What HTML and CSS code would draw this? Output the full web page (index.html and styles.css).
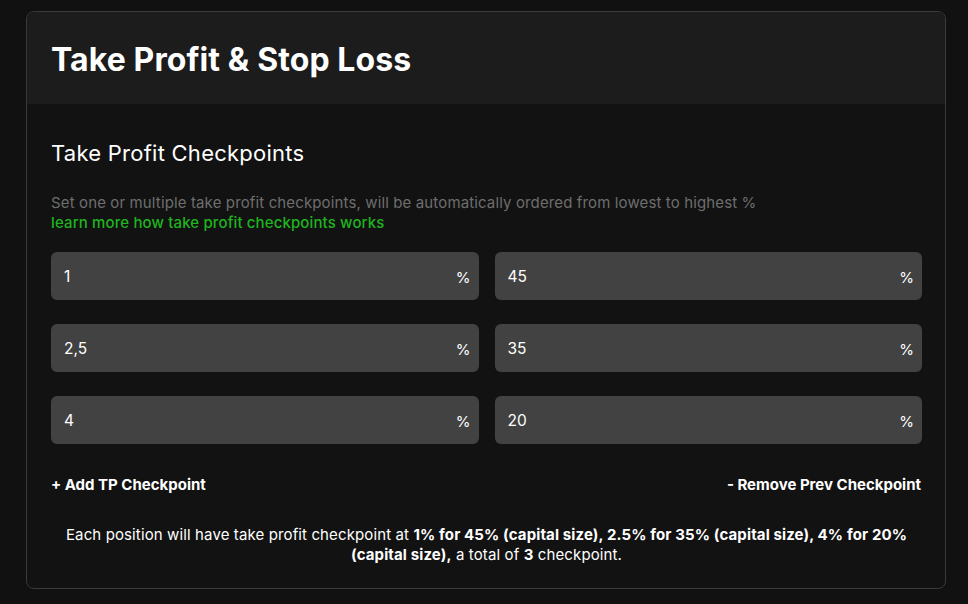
FILE: index.html
```html
<!DOCTYPE html>
<html>
<head>
<meta charset="utf-8">
<link rel="stylesheet" href="styles.css">
</head>
<body>
<div class="card">
  <div class="card-header">
    <h1 class="title">Take Profit &amp; Stop Loss</h1>
  </div>
  <div class="card-body">
    <h2 class="section-title">Take Profit Checkpoints</h2>
    <p class="desc">Set one or multiple take profit checkpoints, will be automatically ordered from lowest to highest %<br><a class="link" href="#">learn more how take profit checkpoints works</a></p>
    <div class="grid">
      <div class="field"><span class="val">1</span><span class="pct">%</span></div>
      <div class="field"><span class="val">45</span><span class="pct">%</span></div>
      <div class="field"><span class="val">2,5</span><span class="pct">%</span></div>
      <div class="field"><span class="val">35</span><span class="pct">%</span></div>
      <div class="field"><span class="val">4</span><span class="pct">%</span></div>
      <div class="field"><span class="val">20</span><span class="pct">%</span></div>
    </div>
    <div class="actions">
      <span class="action">+ Add TP Checkpoint</span>
      <span class="action">- Remove Prev Checkpoint</span>
    </div>
    <p class="summary">Each position will have take profit checkpoint at <b>1% for 45% (capital size), 2.5% for 35% (capital size), 4% for 20% (capital size),</b> a total of <b>3</b> checkpoint.</p>
  </div>
</div>
</body>
</html>
```
FILE: styles.css
```css
* { box-sizing: border-box; }
html, body { margin: 0; padding: 0; background: #111111; }
body {
  font-family: "Inter", "Noto Sans", sans-serif;
  color: #ffffff;
  padding: 11px 22px 0 26px;
}
.card {
  border: 1px solid #3a3a3a;
  border-radius: 8px;
  overflow: hidden;
  background: #121212;
  height: 578px;
}
.card-header {
  background: #1c1c1c;
  height: 92px;
  padding: 0 24px;
  display: flex;
  align-items: center;
}
.title {
  margin: 0;
  padding-top: 2px;
  font-size: 32px;
  font-weight: 700;
  letter-spacing: 0.1px;
}
.card-body {
  padding: 34px 23px 24px 24px;
}
.section-title {
  margin: 0;
  font-size: 22px;
  font-weight: 400;
  line-height: 30px;
  letter-spacing: 0.25px;
}
.desc {
  margin: 25px 0 0;
  font-size: 15px;
  line-height: 20px;
  color: #6e6e6e;
  letter-spacing: 0.13px;
}
.link {
  color: #1fb41f;
  text-decoration: none;
  font-weight: 500;
}
.grid {
  margin-top: 19px;
  display: grid;
  grid-template-columns: 1fr 1fr;
  column-gap: 16px;
  row-gap: 24px;
}
.field {
  background: #424242;
  border-radius: 6px;
  height: 48px;
  display: flex;
  align-items: center;
  justify-content: space-between;
  padding: 0 8px 0 13px;
  font-size: 15.5px;
}
.pct { font-size: 15px; padding-top: 2px; }
.actions {
  margin-top: 31px;
  display: flex;
  justify-content: space-between;
  font-size: 15px;
  font-weight: 700;
  line-height: 20px;
  padding-right: 1px;
}
.summary {
  margin: 30px 0 0;
  text-align: center;
  font-size: 15px;
  line-height: 20px;
  padding: 0 8px;
  letter-spacing: 0.12px;
}
.summary b { font-weight: 700; line-height: 20px; }
```
